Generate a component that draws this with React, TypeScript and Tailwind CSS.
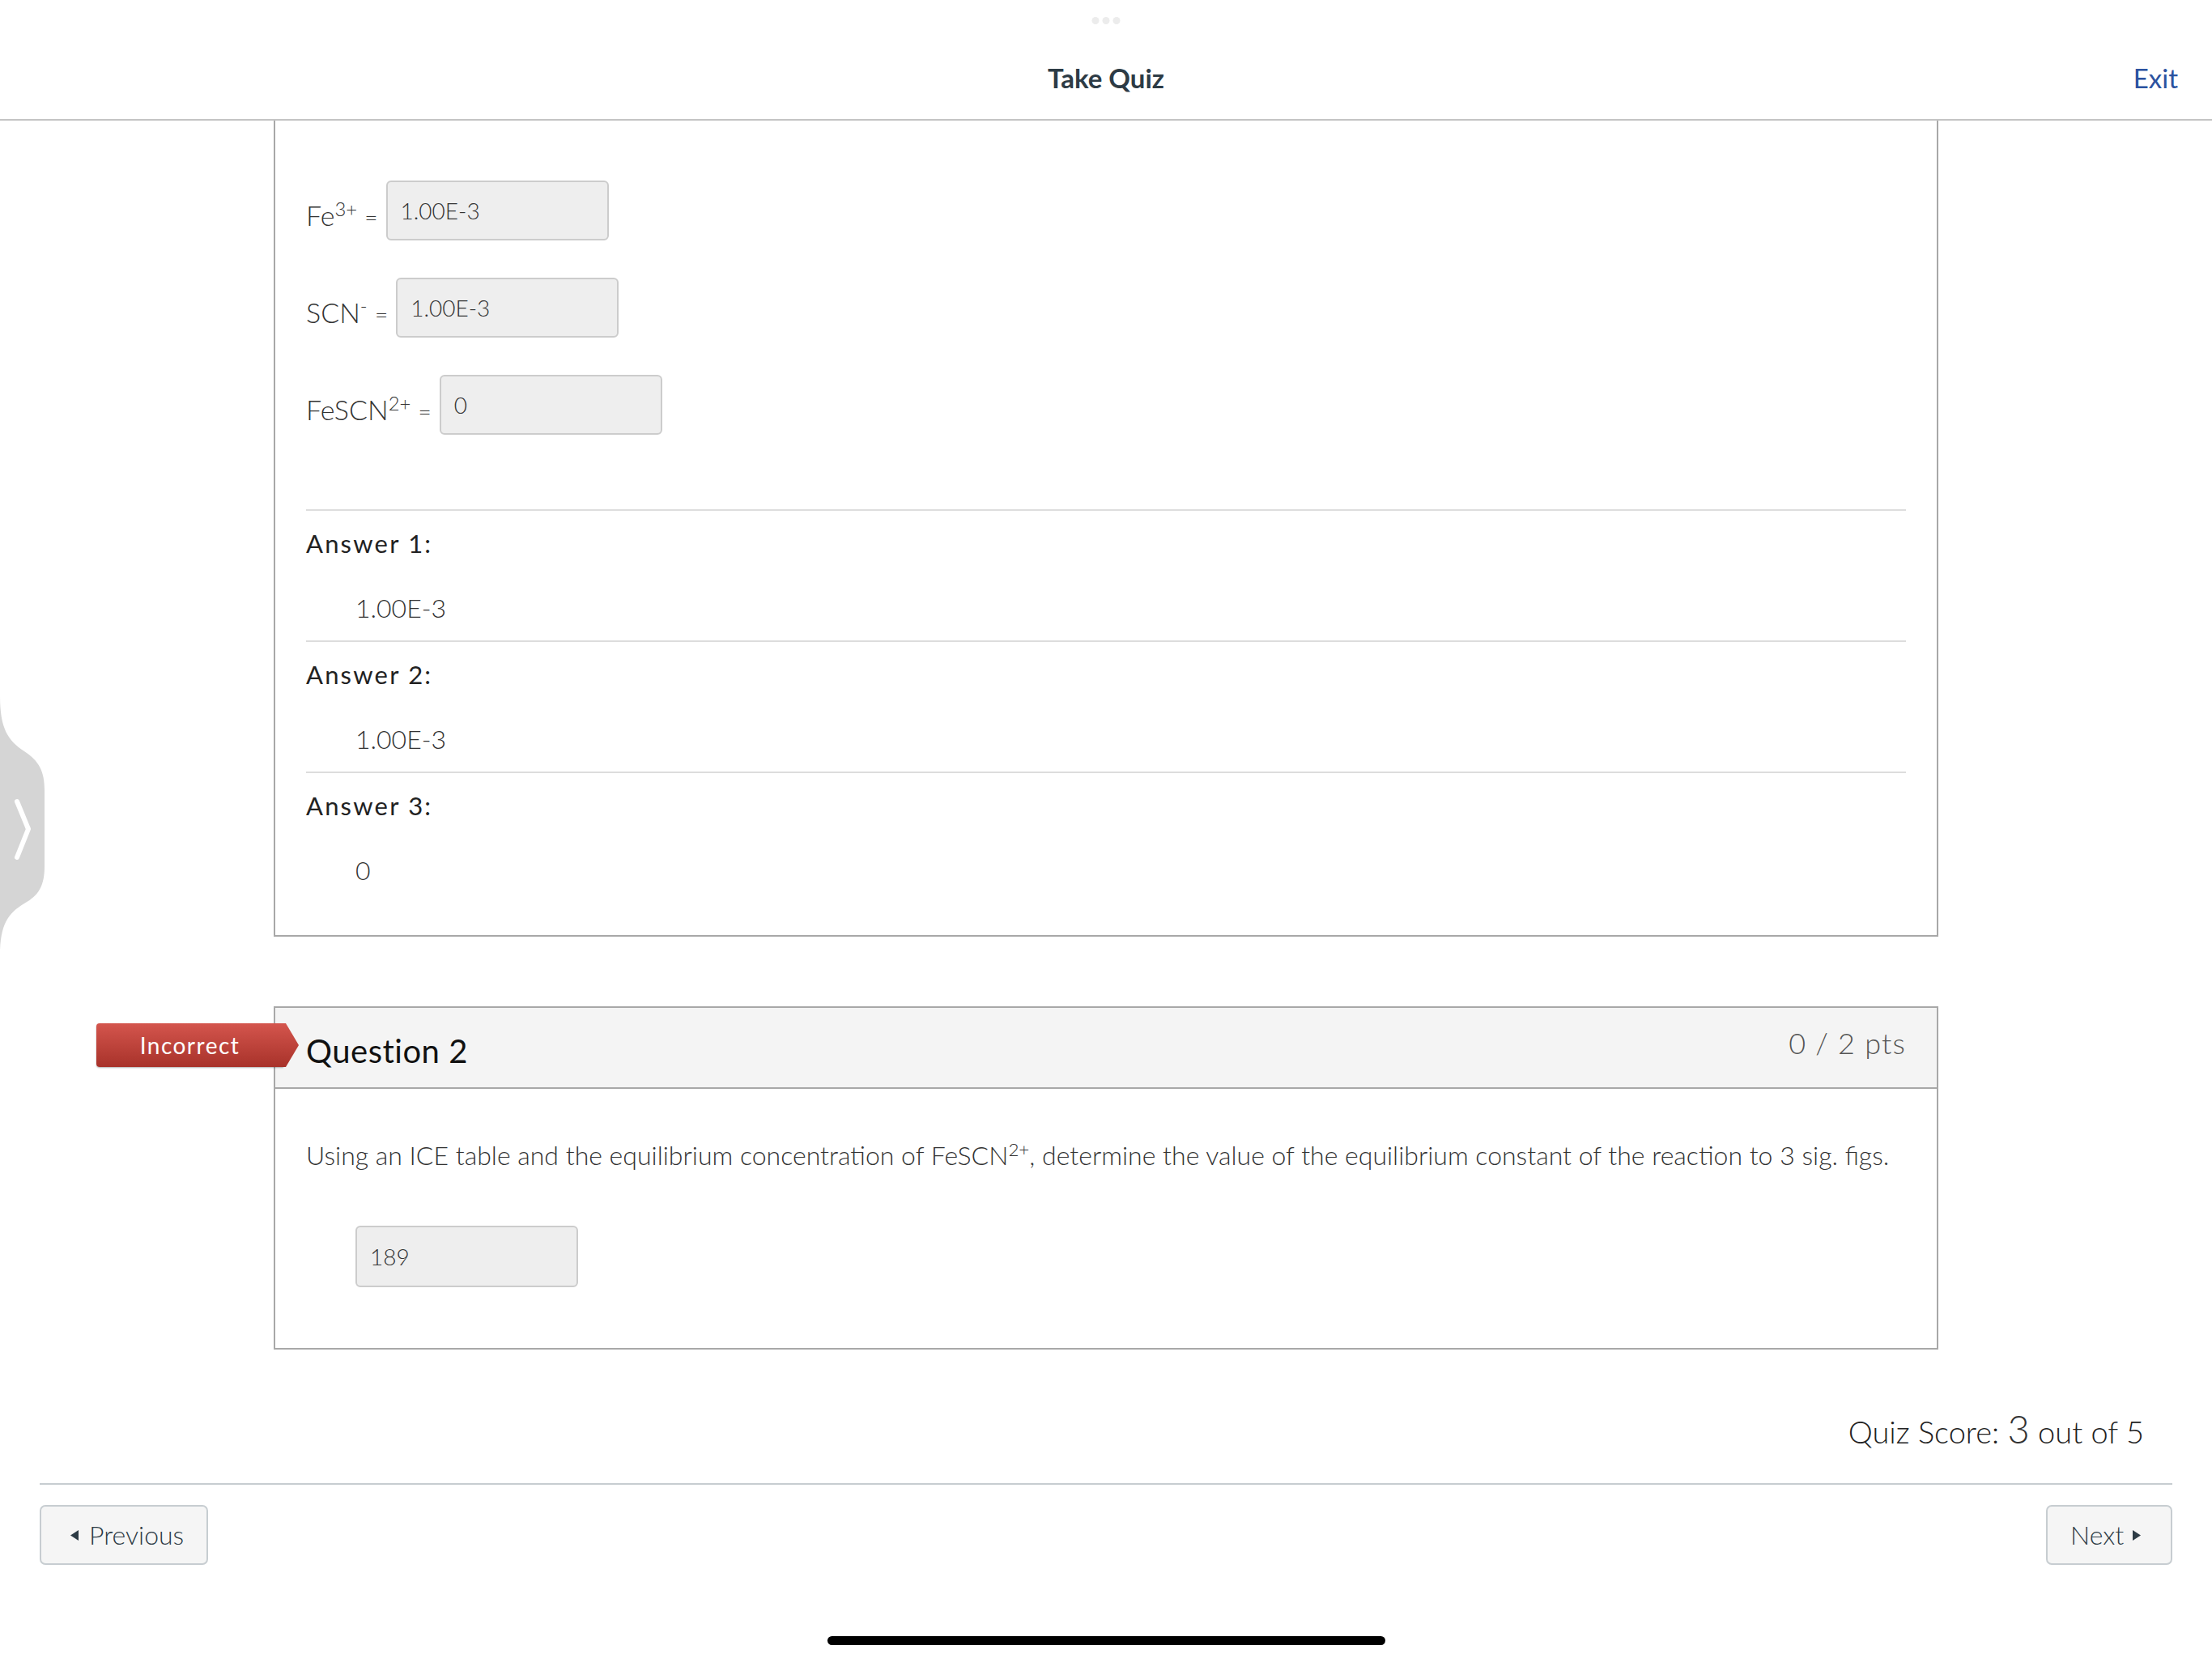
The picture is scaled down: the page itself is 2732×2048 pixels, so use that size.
import type { ReactNode } from "react";

function Sup({ children }: { children: ReactNode }) {
  return <sup className="text-[0.7em]">{children}</sup>;
}

const fields = [
  { key: "fe", label: <>Fe<Sup>3+</Sup></>, value: "1.00E-3" },
  { key: "scn", label: <>SCN<Sup>-</Sup></>, value: "1.00E-3" },
  { key: "fescn", label: <>FeSCN<Sup>2+</Sup></>, value: "0" },
];

const answers = [
  { n: 1, value: "1.00E-3" },
  { n: 2, value: "1.00E-3" },
  { n: 3, value: "0" },
];

function SideTab() {
  return (
    <div className="absolute left-0 top-[860px]">
      <svg width="60" height="320" viewBox="0 0 60 320">
        <path
          d="M0 0 C0 40 10 55 30 68 C48 80 55 92 55 116 L55 210 C55 234 48 246 30 256 C10 268 0 282 0 320 Z"
          fill="#d5d5d5"
        />
        <path
          d="M21 130 L35 164 L21 199"
          fill="none"
          stroke="#ffffff"
          strokeWidth="6"
          strokeLinecap="round"
          strokeLinejoin="round"
        />
      </svg>
    </div>
  );
}

function NavButton({ dir }: { dir: "prev" | "next" }) {
  const tri =
    dir === "prev" ? (
      <svg width="11" height="13" viewBox="0 0 11 13">
        <path d="M10 0 L0 6.5 L10 13 Z" fill="#2d3b45" />
      </svg>
    ) : (
      <svg width="11" height="13" viewBox="0 0 11 13">
        <path d="M1 0 L11 6.5 L1 13 Z" fill="#2d3b45" />
      </svg>
    );
  return (
    <button
      type="button"
      className={
        dir === "prev"
          ? "flex h-[74px] w-[208px] items-center gap-[12px] rounded-[7px] border-2 border-[#c7cdd1] bg-[#f5f5f5] pl-[36px] text-[32px] font-light text-[#2d3b45]"
          : "flex h-[74px] w-[156px] items-center gap-[10px] rounded-[7px] border-2 border-[#c7cdd1] bg-[#f5f5f5] pl-[28px] text-[32px] font-light text-[#2d3b45]"
      }
    >
      {dir === "prev" && tri}
      <span>{dir === "prev" ? "Previous" : "Next"}</span>
      {dir === "next" && tri}
    </button>
  );
}

export default function App() {
  return (
    <div className="relative h-[2048px] w-[2732px] overflow-hidden bg-white font-['Lato','Liberation_Sans',sans-serif] text-[#2d3b45]">
      {/* header */}
      <div className="relative h-[149px] border-b-2 border-[#c4c4c4]">
        <div className="absolute left-1/2 top-[21px] flex -translate-x-1/2 gap-[4px]">
          <span className="h-[9px] w-[9px] rounded-full bg-[#ececec]" />
          <span className="h-[9px] w-[9px] rounded-full bg-[#ececec]" />
          <span className="h-[9px] w-[9px] rounded-full bg-[#ececec]" />
        </div>
        <div className="flex justify-center pt-[76px] text-[33px] font-bold leading-[40px] text-[#2d3b45]">
          Take Quiz
        </div>
        <div className="absolute right-[42px] top-[76px] text-[33px] leading-[40px] text-[#2b52a0]">
          Exit
        </div>
      </div>

      <SideTab />

      {/* question 1 (scrolled) */}
      <div className="ml-[338px] w-[2056px] border-x-2 border-b-2 border-[#a8a8a8] px-[38px] pb-[60px] pt-[74px]">
        <div className="flex flex-col gap-[46px]">
          {fields.map((f) => (
            <div key={f.key} className="flex items-start gap-[10px]">
              <span className="mt-[21px] text-[34px] font-light leading-[44px] text-[#333]">
                {f.label} <span className="text-[28px]">=</span>
              </span>
              <div className="flex h-[74px] w-[275px] items-center rounded-[6px] border-2 border-[#cccccc] bg-[#eeeeee] pl-[16px] text-[28px] font-light text-[#333]">
                {f.value}
              </div>
            </div>
          ))}
        </div>

        <div className="mt-[92px]">
          {answers.map((a) => (
            <div key={a.n} className="border-t-2 border-[#dddddd] pt-[20px]">
              <div className="text-[31px] leading-[40px] tracking-[2.2px] text-[#222]">
                Answer {a.n}:
              </div>
              <div
                className={
                  a.n === 3
                    ? "mt-[40px] pl-[61px] text-[32px] font-light leading-[40px] text-[#333]"
                    : "mb-[20px] mt-[40px] pl-[61px] text-[32px] font-light leading-[40px] text-[#333]"
                }
              >
                {a.value}
              </div>
            </div>
          ))}
        </div>
      </div>

      {/* question 2 */}
      <div className="relative ml-[338px] mt-[86px] w-[2056px] border-2 border-[#a8a8a8]">
        <div className="absolute left-[-221px] top-[19px] flex h-[54px] items-center">
          <div className="flex h-[54px] w-[231px] items-center justify-center rounded-l-[4px] bg-gradient-to-b from-[#d4554d] to-[#a8322a] text-[28px] tracking-[1.5px] text-white shadow-[0_1px_2px_rgba(0,0,0,0.3)]">
            Incorrect
          </div>
          <svg width="20" height="54" viewBox="0 0 20 54" className="-ml-px">
            <defs>
              <linearGradient id="badgeGrad" x1="0" y1="0" x2="0" y2="1">
                <stop offset="0" stopColor="#d4554d" />
                <stop offset="1" stopColor="#a8322a" />
              </linearGradient>
            </defs>
            <path d="M0 0 L4 0 L20 27 L4 54 L0 54 Z" fill="url(#badgeGrad)" />
          </svg>
        </div>

        <div className="flex h-[100px] items-start justify-between border-b-2 border-[#a8a8a8] bg-[#f4f4f4] px-[38px]">
          <div className="mt-[29px] text-[40px] leading-[48px] tracking-[0.5px] text-[#111]">
            Question 2
          </div>
          <div className="mt-[21px] text-[36px] font-light leading-[44px] tracking-[1.2px] text-[#555]">
            0 / 2 pts
          </div>
        </div>

        <div className="px-[38px] pb-[75px] pt-[62px]">
          <p className="text-[32px] font-light leading-[40px] text-[#333]">
            Using an ICE table and the equilibrium concentration of FeSCN
            <Sup>2+</Sup>, determine the value of the equilibrium constant of
            the reaction to 3 sig. figs.
          </p>
          <div className="ml-[61px] mt-[67px] flex h-[76px] w-[275px] items-center rounded-[6px] border-2 border-[#cccccc] bg-[#eeeeee] pl-[16px] text-[28px] font-light text-[#333]">
            189
          </div>
        </div>
      </div>

      {/* score */}
      <div className="mx-[49px] mt-[75px] flex justify-end pr-[35px] text-[38px] font-light leading-[52px] text-[#222]">
        <span>
          Quiz Score: <span className="text-[47px] leading-none text-[#333]">3</span> out of 5
        </span>
      </div>

      <div className="mx-[49px] mt-[38px] border-t-2 border-[#c7cdd1]" />

      <div className="mx-[49px] mt-[25px] flex justify-between">
        <NavButton dir="prev" />
        <NavButton dir="next" />
      </div>

      <div className="mx-auto mt-[88px] h-[11px] w-[689px] rounded-full bg-black" />
    </div>
  );
}
